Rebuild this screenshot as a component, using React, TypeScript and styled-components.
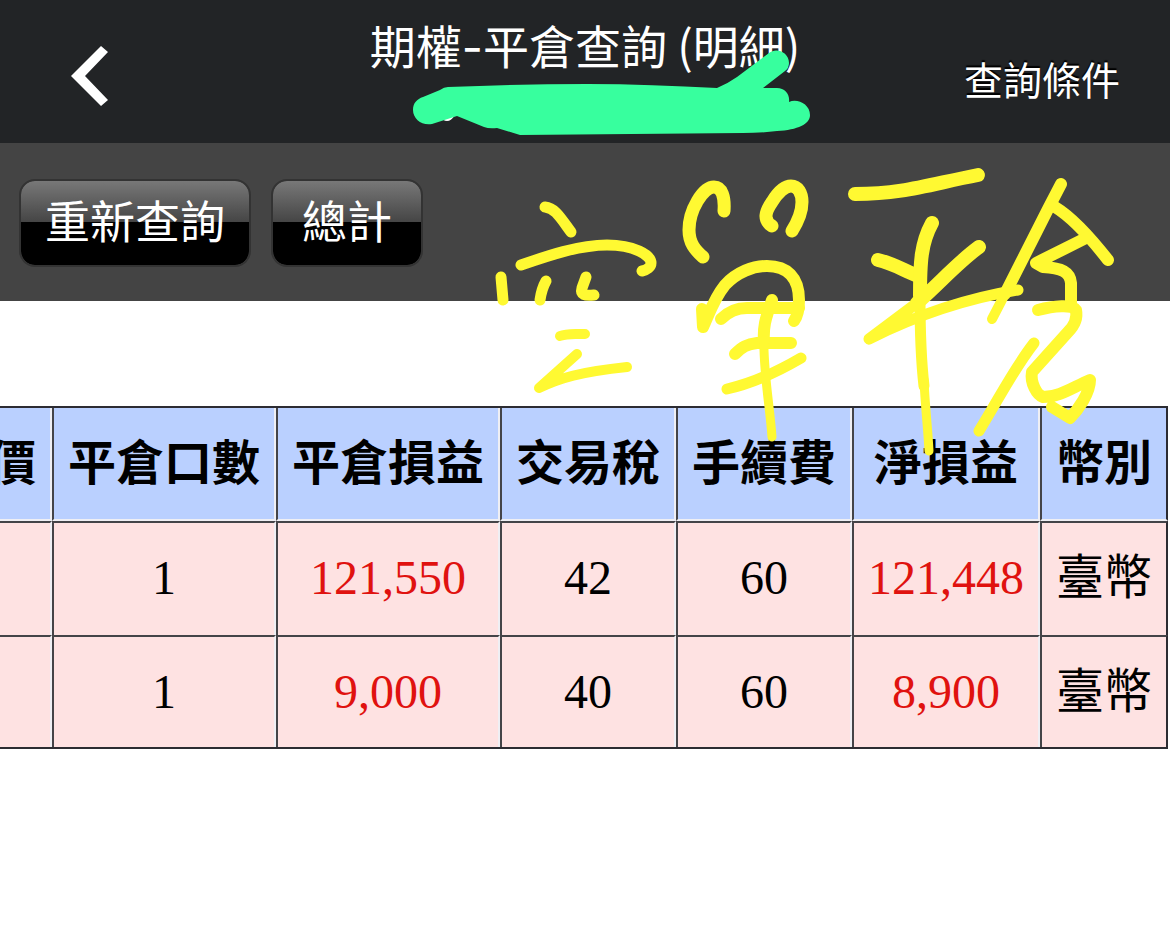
import React from "react";
import styled, { createGlobalStyle } from "styled-components";

const GlobalStyle = createGlobalStyle`
  * { box-sizing: border-box; }
  body { margin: 0; background: #fff; }
`;

const sans = `"Noto Sans CJK TC", sans-serif`;

const Page = styled.div`
  position: relative;
  width: 100%;
  overflow-x: hidden;
  padding-bottom: 190px;
  font-family: ${sans};
`;

const Header = styled.header`
  display: grid;
  grid-template-columns: 1fr auto 1fr;
  align-items: center;
  min-height: 143px;
  padding: 0 50px 0 70px;
  background: #222426;
  color: #fff;
`;

const BackButton = styled.button`
  display: flex;
  justify-self: start;
  margin-top: 8px;
  padding: 0;
  border: 0;
  background: none;
  color: inherit;
`;

const Title = styled.h1`
  align-self: start;
  margin: 16px 20px 0 0;
  font-size: 46px;
  font-weight: 400;
  line-height: 56px;
  white-space: nowrap;
`;

const Dash = styled.span`
  font-family: Inter, sans-serif;
`;

const FilterButton = styled.button`
  justify-self: end;
  margin-top: 12px;
  padding: 0;
  border: 0;
  background: none;
  color: #fff;
  font-family: ${sans};
  font-size: 39px;
  font-weight: 400;
  line-height: 48px;
  text-shadow: 0 -2px 1px #000;
`;

const Toolbar = styled.nav`
  display: flex;
  gap: 20px;
  padding: 36px 19px 34px;
  background: #444;
`;

const GlossyButton = styled.button`
  min-width: 152px;
  height: 88px;
  padding: 0 24px 6px;
  border: 2px solid #333;
  border-radius: 16px;
  background: linear-gradient(#787878, #454545 49%, #000 49%) padding-box;
  color: #fff;
  font-family: ${sans};
  font-size: 45px;
  font-weight: 400;
  line-height: 56px;
`;

const TableFrame = styled.main`
  display: flex;
  justify-content: flex-end;
  margin-top: 105px;
  padding-right: 2px;
  overflow: hidden;
`;

const Table = styled.table`
  flex: none;
  border-spacing: 0;
  border: 0 solid #2c2c32;
  border-width: 2px 0;
  font-family: "Liberation Serif", "Noto Sans CJK TC", serif;
  font-size: 48px;
  line-height: 56px;
  text-align: center;
  white-space: nowrap;
  color: #000;
`;

const HeadCell = styled.th`
  height: 113px;
  padding: 0 14px;
  border: 0 solid #efeff4;
  border-width: 0 2px 2px 2px;
  border-left-color: #444448;
  background: #bad0ff;
  font-weight: 700;

  &:last-child { border-right-color: #2c2c32; }
`;

const Cell = styled.td<{ $gain?: boolean }>`
  height: 114px;
  padding: 0 14px 2px;
  border: 0 solid #444448;
  border-width: 2px 2px 0 2px;
  border-right-color: #efeff4;
  background: #fee2e2;
  color: ${(p) => (p.$gain ? "#e0120f" : "#000")};

  tr:last-child > & { height: 112px; padding-bottom: 0; }
  &:last-child { border-right-color: #2c2c32; }
`;

const Ink = styled.svg`
  position: absolute;
  top: 0;
  left: 0;
  pointer-events: none;
`;

const columns = ["價", "平倉口數", "平倉損益", "交易稅", "手續費", "淨損益", "幣別"];
const gainColumns = [2, 5];
const rows = [
  ["", "1", "121,550", "42", "60", "121,448", "臺幣"],
  ["", "1", "9,000", "40", "60", "8,900", "臺幣"],
];

// Handwritten strokes: [line width, path]
const strokes: [number, string][] = [
  // 空
  [11, "M545 207C555 208 560 217 571 232"],
  [11, "M521 265C547 256 579 245 607 245C634 245 651 255 651 263C651 267 647 270 642 271"],
  [11, "M501 277L503 300"],
  [11, "M546 281C542 288 541 293 540 300"],
  [11, "M586 277L582 288C580 295 585 296 594 295"],
  [10, "M560 336C567 333 573 334 585 334"],
  [10, "M577 354L539 388C560 378 580 372 627 367"],
  // 單
  [13, "M724 211C725 197 722 187 714 187C703 187 689 210 689 230C689 243 695 250 703 257"],
  [13, "M772 226C763 220 765 212 772 202C778 192 785 186 791 186C798 186 802 193 802 202C802 213 797 223 792 231"],
  [12, "M702 309L703 327C708 317 713 300 725 285C737 272 753 266 767 266C787 266 799 277 799 300C799 310 797 317 794 321"],
  [12, "M721 319C728 312 737 308 747 308L799 308"],
  [12, "M735 354C742 347 747 344 757 343L791 343"],
  [11, "M727 389C750 384 777 372 801 358"],
  [12, "M772 300C765 320 763 327 764 343"],
  [9, "M764 340C763 370 770 407 772 437"],
  // 平
  [14, "M855 194C903 194 927 185 978 175"],
  [14, "M878 260C892 263 903 270 918 276"],
  [14, "M932 223C921 243 920 262 920 296"],
  [11, "M920 296C920 325 921 360 924 386"],
  [9, "M924 380C925 405 928 430 929 451"],
  [14, "M979 247C957 263 940 283 917 303"],
  [11, "M917 303L869 339C907 320 957 300 1018 290"],
  // 倉
  [12, "M1061 184L1048 209C1030 245 1015 274 1005 294"],
  [10, "M1006 292L992 319"],
  [12, "M1055 207C1073 218 1090 237 1108 260"],
  [12, "M1088 237L1036 263L1043 267C1062 268 1070 272 1071 283L1071 303"],
  [12, "M1038 310C1053 306 1073 304 1076 310C1078 320 1073 327 1068 332L1032 372C1030 383 1037 395 1043 397C1060 397 1073 387 1090 380C1090 393 1078 410 1070 418L1052 407"],
  [11, "M1034 343C1013 370 1000 397 979 431"],
];

const Annotations = () => (
  <Ink width="1170" height="942" viewBox="0 0 1170 942" aria-hidden="true">
    <ellipse cx="447" cy="105" rx="10" ry="16" fill="#fff" />
    <path
      fill="#37ff9e"
      d="M423 97L440 90Q444 87 448 87C495 85 541 84 587 84C631 84 674 86 717 88Q727 84 737 77L769 53C776 47 789 52 789 63Q789 68 785 71L763 88H777C785 88 790 94 789 102C797 98 810 104 810 115C810 124 798 130 777 131Q760 133 743 133L520 135L497 128Q489 129 484 127L457 116L432 124C422 126 413 119 413 110C413 103 417 99 423 97Z"
    />
    <g fill="none" stroke="#fff932" strokeLinecap="round" strokeLinejoin="round">
      {strokes.map(([width, d]) => (
        <path key={d} strokeWidth={width} d={d} />
      ))}
    </g>
  </Ink>
);

export default function App() {
  return (
    <Page>
      <GlobalStyle />
      <Header>
        <BackButton type="button" aria-label="返回">
          <svg width="39" height="60" viewBox="0 0 39 60">
            <path d="M31 0L38 6L15 30L38 54L31 60L1 30Z" fill="currentColor" />
          </svg>
        </BackButton>
        <Title>
          期權<Dash>-</Dash>平倉查詢 (明細)
        </Title>
        <FilterButton type="button">查詢條件</FilterButton>
      </Header>
      <Toolbar>
        <GlossyButton type="button">重新查詢</GlossyButton>
        <GlossyButton type="button">總計</GlossyButton>
      </Toolbar>
      <TableFrame>
        <Table>
          <thead>
            <tr>
              {columns.map((name) => (
                <HeadCell key={name} scope="col">{name}</HeadCell>
              ))}
            </tr>
          </thead>
          <tbody>
            {rows.map((row, r) => (
              <tr key={r}>
                {row.map((value, c) => (
                  <Cell key={c} $gain={gainColumns.includes(c)}>{value}</Cell>
                ))}
              </tr>
            ))}
          </tbody>
        </Table>
      </TableFrame>
      <Annotations />
    </Page>
  );
}
